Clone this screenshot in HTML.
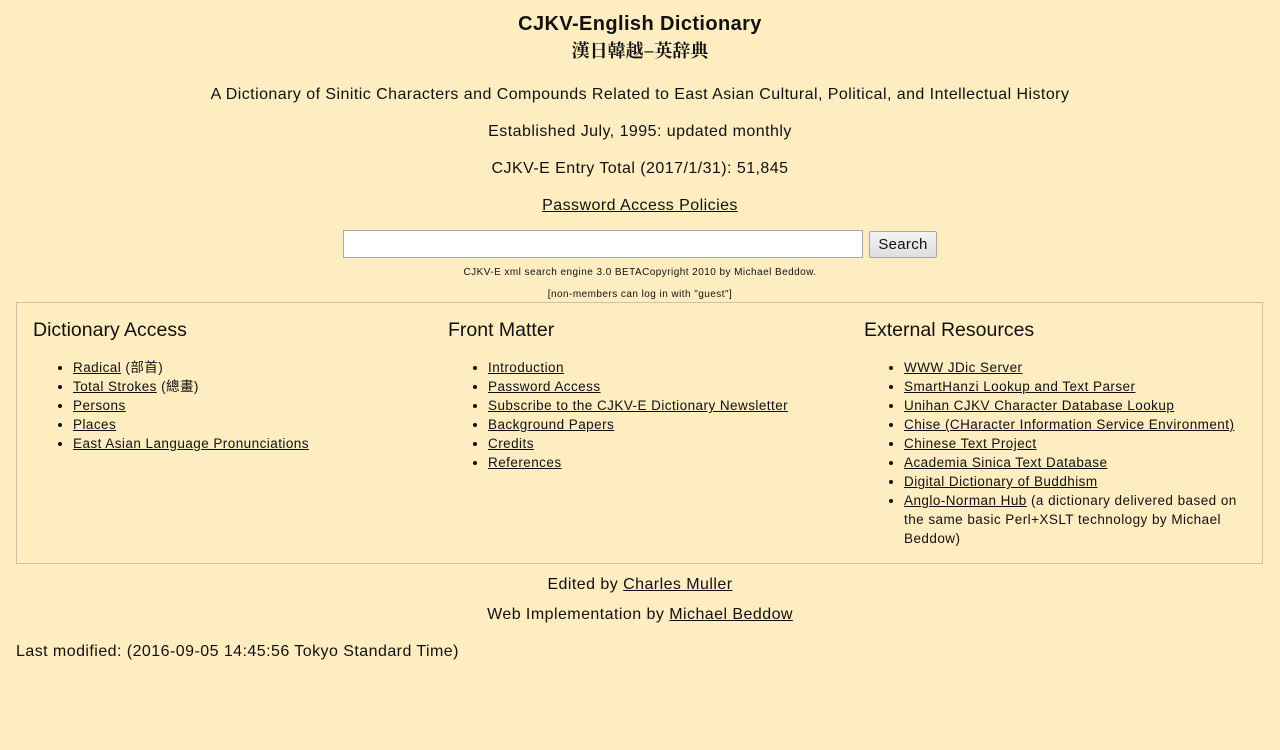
<!DOCTYPE html>
<html><head><meta charset="utf-8"><style>
body{margin:0;background:#feedc1;font-family:"Liberation Sans","Noto Sans CJK TC",sans-serif;color:#111;font-size:16px;letter-spacing:0.45px;}
a{color:#111;text-decoration:underline;}
.t1{position:absolute;left:0;width:1280px;text-align:center;}
h1{position:absolute;top:12px;left:0;width:1280px;text-align:center;margin:0;font-size:20px;font-weight:bold;line-height:24px;letter-spacing:0.4px;}
.cjk{position:absolute;top:38px;left:0;width:1280px;text-align:center;font-size:18px;font-weight:bold;font-family:"Noto Serif CJK SC",serif;line-height:24px;letter-spacing:0;}
.box{position:absolute;left:16px;top:302px;width:1245px;height:260px;border:1px solid #ccc2a6;}
.col{position:absolute;top:16px;width:400px;}
.col h2{margin:0;font-size:19.5px;font-weight:normal;line-height:22px;letter-spacing:0;}
.col ul{margin:17px 0 0;padding-left:40px;font-size:13.5px;line-height:19px;}
.sm{font-size:10px;}
</style></head><body>
<h1>CJKV-English Dictionary</h1>
<div class="cjk">漢日韓越–英辞典</div>
<div class="t1" style="top:86px">A Dictionary of Sinitic Characters and Compounds Related to East Asian Cultural, Political, and Intellectual History</div>
<div class="t1" style="top:123px">Established July, 1995: updated monthly</div>
<div class="t1" style="top:160px">CJKV-E Entry Total (2017/1/31): 51,845</div>
<div class="t1" style="top:197px"><a href="#">Password Access Policies</a></div>
<div style="position:absolute;left:343px;top:230px;width:518px;height:26px;background:#fff;border:1px solid #a9a9a9;"></div>
<div style="position:absolute;left:869px;top:231px;width:66px;height:25px;background:linear-gradient(#f4f4f4,#dedede);border:1px solid #a6a6a6;border-radius:2px;text-align:center;line-height:25px;font-size:15px;letter-spacing:0.3px;">Search</div>
<div class="t1 sm" style="top:267px">CJKV-E xml search engine 3.0 BETACopyright 2010 by Michael Beddow.</div>
<div class="t1 sm" style="top:289px">[non-members can log in with "guest"]</div>
<div class="box">
<div class="col" style="left:16px"><h2>Dictionary Access</h2><ul>
<li><a href="#">Radical</a> (部首)</li><li><a href="#">Total Strokes</a> (總畫)</li><li><a href="#">Persons</a></li><li><a href="#">Places</a></li><li><a href="#">East Asian Language Pronunciations</a></li></ul></div>
<div class="col" style="left:431px"><h2>Front Matter</h2><ul>
<li><a href="#">Introduction</a></li><li><a href="#">Password Access</a></li><li><a href="#">Subscribe to the CJKV-E Dictionary Newsletter</a></li><li><a href="#">Background Papers</a></li><li><a href="#">Credits</a></li><li><a href="#">References</a></li></ul></div>
<div class="col" style="left:847px;width:390px"><h2>External Resources</h2><ul>
<li><a href="#">WWW JDic Server</a></li><li><a href="#">SmartHanzi Lookup and Text Parser</a></li><li><a href="#">Unihan CJKV Character Database Lookup</a></li><li><a href="#">Chise (CHaracter Information Service Environment)</a></li><li><a href="#">Chinese Text Project</a></li><li><a href="#">Academia Sinica Text Database</a></li><li><a href="#">Digital Dictionary of Buddhism</a></li><li><a href="#">Anglo-Norman Hub</a> (a dictionary delivered based on the same basic Perl+XSLT technology by Michael Beddow)</li></ul></div>
</div>
<div class="t1" style="top:576px">Edited by <a href="#">Charles Muller</a></div>
<div class="t1" style="top:606px">Web Implementation by <a href="#">Michael Beddow</a></div>
<div style="position:absolute;left:16px;top:643px">Last modified: (2016-09-05 14:45:56 Tokyo Standard Time)</div>
</body></html>
